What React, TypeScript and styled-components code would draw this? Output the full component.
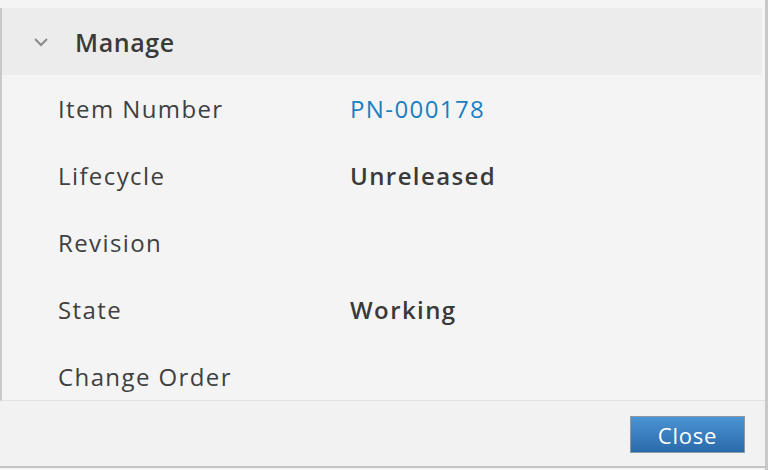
import React from 'react';
import styled, { createGlobalStyle } from 'styled-components';

const GlobalStyle = createGlobalStyle`
  html, body {
    margin: 0;
    padding: 0;
    background: #f4f4f4;
  }
  body {
    font-family: "Open Sans", "Noto Sans", sans-serif;
    color: #3c3c3c;
  }
`;

const Panel = styled.div`
  width: 768px;
  height: 470px;
  box-sizing: border-box;
  display: flex;
  flex-direction: column;
  background: #f4f4f4;
  padding-top: 8px;
  padding-bottom: 2px;
  border-right: 3px solid #c8c8c8;
  overflow: hidden;
`;

const Body = styled.div`
  flex: 1;
  display: flex;
  flex-direction: column;
  border-left: 2px solid #c9c9c9;
  border-bottom: 1px solid #e2e2e2;
  padding-right: 3px;
  min-height: 0;
  overflow: hidden;
`;

const SectionHeader = styled.div`
  flex-shrink: 0;
  height: 67px;
  display: flex;
  align-items: center;
  background: #ececec;
  padding-left: 31px;
  gap: 26px;
`;

const SectionTitle = styled.span`
  font-size: 25px;
  font-weight: 600;
  color: #3a3a3a;
  letter-spacing: 0.6px;
`;

const Rows = styled.div`
  display: flex;
  flex-direction: column;
`;

const Row = styled.div`
  flex-shrink: 0;
  height: 67px;
  display: grid;
  grid-template-columns: 292px 1fr;
  align-items: center;
  padding-left: 56px;
  font-size: 24px;
  letter-spacing: 1.4px;
`;

const Label = styled.span`
  color: #404040;
`;

const Value = styled.span<{ $link?: boolean }>`
  color: ${(p) => (p.$link ? '#1a7fc0' : '#3a3a3a')};
  font-weight: ${(p) => (p.$link ? 400 : 600)};
`;

const Footer = styled.div`
  flex-shrink: 0;
  height: 67px;
  display: flex;
  align-items: center;
  justify-content: flex-end;
  padding-right: 20px;
  background: #f2f2f2;
  border-bottom: 2px solid #c4c4c4;
  box-sizing: border-box;
`;

const Button = styled.button`
  width: 115px;
  height: 37px;
  border: 1px solid #8c9aa8;
  background: linear-gradient(#4b93d4, #2a6aaa);
  color: #ffffff;
  font-family: "Open Sans", "Noto Sans", sans-serif;
  font-size: 22px;
  letter-spacing: 0.8px;
  padding: 0;
  margin-top: 2px;
  cursor: pointer;
`;

const Chevron = () => (
  <svg width="16" height="10" viewBox="0 0 16 10">
    <path d="M2 2 L8 8 L14 2" fill="none" stroke="#8a8a8a" strokeWidth="2" />
  </svg>
);

const rows = [
  { label: 'Item Number', value: 'PN-000178', link: true },
  { label: 'Lifecycle', value: 'Unreleased' },
  { label: 'Revision', value: '' },
  { label: 'State', value: 'Working' },
  { label: 'Change Order', value: '' },
];

export default function App() {
  return (
    <>
      <GlobalStyle />
      <Panel>
        <Body>
          <SectionHeader>
            <Chevron />
            <SectionTitle>Manage</SectionTitle>
          </SectionHeader>
          <Rows>
            {rows.map((r) => (
              <Row key={r.label}>
                <Label>{r.label}</Label>
                <Value $link={r.link}>{r.value}</Value>
              </Row>
            ))}
          </Rows>
        </Body>
        <Footer>
          <Button>Close</Button>
        </Footer>
      </Panel>
    </>
  );
}
